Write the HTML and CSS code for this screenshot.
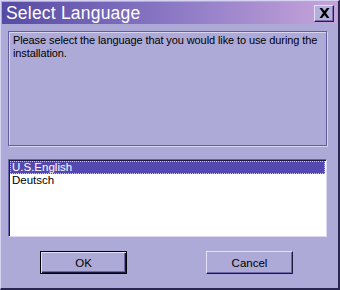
FILE: index.html
```html
<!DOCTYPE html>
<html>
<head>
<meta charset="utf-8">
<link rel="stylesheet" href="styles.css">
</head>
<body>
<div class="window">
  <div class="titlebar">
    <span class="title">Select Language</span>
    <span class="close"><svg width="11" height="10" viewBox="0 0 11 10"><path d="M0.5 0h2.6l2.4 3L7.9 0h2.6L7 5l3.5 5H7.9L5.5 7 3.1 10H0.5L4 5z" fill="#000"/></svg></span>
  </div>
  <div class="content">
    <div class="panel">Please select the language that you would like to use during the installation.</div>
    <div class="listbox">
      <div class="item selected"><span class="focus">U.S.English</span></div>
      <div class="item">Deutsch</div>
    </div>
    <div class="buttons">
      <div class="btn default"><span>OK</span></div>
      <div class="btn"><span>Cancel</span></div>
    </div>
  </div>
</div>
</body>
</html>
```
FILE: styles.css
```css
html, body { margin: 0; padding: 0; background: #aeaad8; }
.window {
  width: 340px; height: 290px; box-sizing: border-box;
  background: #aeaad8;
  border-left: 1px solid #d6d2f2; border-top: 1px solid #d6d2f2;
  border-right: 2px solid #2a2652; border-bottom: 2px solid #2a2652;
  padding: 1px;
  font-family: "Liberation Sans", Arial, sans-serif;
  font-size: 11px; color: #000;
  display: flex; flex-direction: column;
}
.titlebar {
  height: 22px; display: flex; align-items: center; justify-content: space-between;
  background: linear-gradient(to right, #564ba4 0%, #8a78c4 50%, #c6a4da 100%);
  padding: 0 3px 0 4px;
}
.title { color: #fff; font-size: 17.5px; letter-spacing: 0.2px; }
.close {
  width: 20px; height: 17px; box-sizing: border-box;
  background: #b4b0dc;
  border-top: 1px solid #e2def8; border-left: 1px solid #e2def8;
  border-right: 1px solid #22204a; border-bottom: 1px solid #22204a;
  box-shadow: inset -1px -1px 0 #7670b0;
  display: flex; align-items: center; justify-content: center;
}
.content { padding: 7px 0 0 6px; display: flex; flex-direction: column; }
.panel {
  width: 319px; height: 115px; box-sizing: border-box;
  border: 1px solid #645ca4;
  box-shadow: 1px 1px 0 #d8d4f2, inset 1px 1px 0 #d8d4f2;
  padding: 2px 4px;
  line-height: 13px;
  letter-spacing: -0.1px;
}
.listbox {
  margin-top: 13px;
  width: 319px; height: 78px; box-sizing: border-box;
  background: #fff;
  border-top: 1px solid #6a62a8; border-left: 1px solid #6a62a8;
  border-right: 1px solid #dcd8f4; border-bottom: 1px solid #dcd8f4;
  box-shadow: inset 1px 1px 0 #1e1a40;
  padding: 1px 1px 0 1px;
}
.item { height: 13px; line-height: 13px; padding-left: 2px; font-size: 11.5px; }
.item.selected {
  background: #5448b0; color: #fff; padding-left: 0;
  outline: 1px dotted #d8d0a0; outline-offset: -1px;
}
.item.selected .focus { padding-left: 2px; }
.buttons { display: flex; margin-top: 14px; padding-left: 32px; gap: 79px; }
.btn {
  width: 87px; height: 23px; box-sizing: border-box;
  background: #aeaad8;
  font-size: 11.5px;
  border-top: 1px solid #e4e0fa; border-left: 1px solid #e4e0fa;
  border-right: 1px solid #1c1a3c; border-bottom: 1px solid #1c1a3c;
  box-shadow: inset -1px -1px 0 #6e68a8;
  display: flex; align-items: center; justify-content: center;
}
.btn.default {
  border: 1px solid #000;
  box-shadow: inset 1px 1px 0 #e4e0fa, inset -1px -1px 0 #1c1a3c, inset -2px -2px 0 #6e68a8;
}
```
